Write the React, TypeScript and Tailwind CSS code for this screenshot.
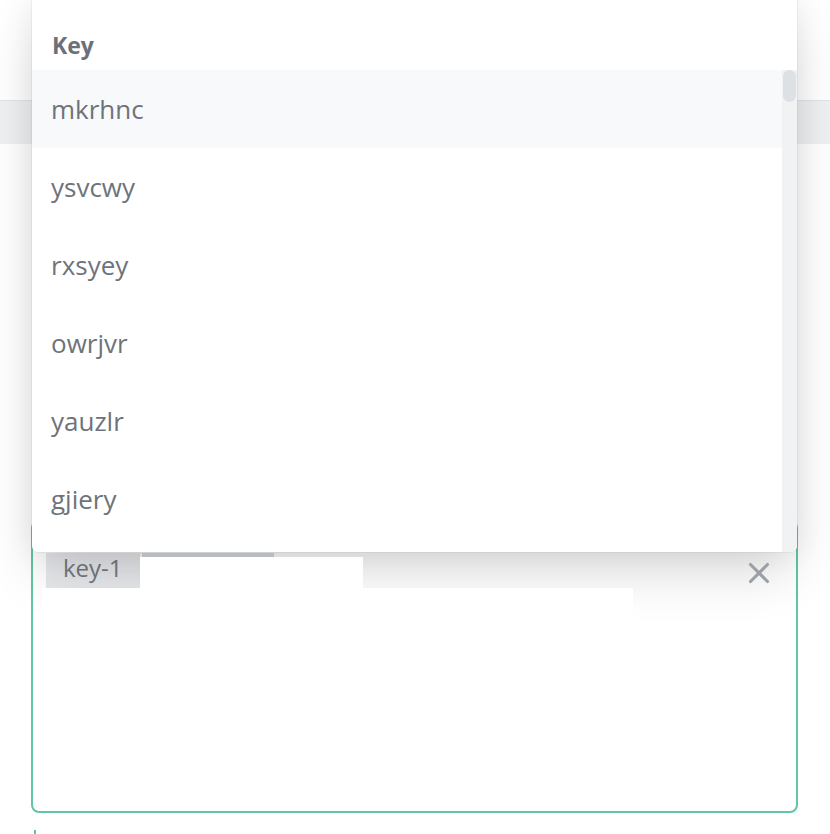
import { X } from "lucide-react"

const keys = ["mkrhnc", "ysvcwy", "rxsyey", "owrjvr", "yauzlr", "gjiery", "qtbnwa"]

export default function App() {
  return (
    <div className="relative h-[834px] w-[830px] overflow-hidden bg-white font-['Open_Sans',sans-serif]">
      {/* page header band behind the popover */}
      <div className="mt-[100px] h-[44px] border-t border-[#e2e4e7] bg-[#eef0f2]" />

      {/* key input */}
      <div className="relative ml-[31px] mt-[376px] h-[293px] w-[767px] rounded-lg border-2 border-[#62c6a0]">
        <div className="flex items-start pl-[13px] pt-[31px]">
          <span className="h-[35px] bg-[#e6e8eb] px-[17px] text-[24px] leading-[29px] text-[#747980]">key-1</span>
          <span className="ml-[2px] h-[35px] w-[132px] bg-[#d5d9de]" />
        </div>
        <div className="absolute left-[107px] top-[35px] z-20 h-[31px] w-[223px] bg-white" />
        <div className="absolute left-[9px] top-[66px] z-20 h-[110px] w-[591px] bg-white" />
        <button type="button" className="absolute right-[20px] top-[34px] z-20 text-[#9a9ea5]">
          <X size={34} strokeWidth={2.2} />
        </button>
      </div>
      <div className="ml-[34px] mt-[17px] h-[4px] w-[2px] bg-[#5ec59b]" />

      {/* dropdown */}
      <div className="absolute left-[32px] top-[-6px] z-10 flex h-[558px] w-[765px] flex-col overflow-hidden rounded-md bg-white shadow-[0_0_0_1px_rgba(0,0,0,0.04),0_24px_50px_-6px_rgba(0,0,0,0.16),0_0_30px_rgba(0,0,0,0.06)]">
        <div className="h-[76px] shrink-0 pl-[20px] pt-[36px] text-[23px] font-bold leading-[30px] text-[#6b7079]">Key</div>
        <div className="flex min-h-0 flex-1">
          <div className="flex-1 overflow-hidden">
            {keys.map((k, i) => (
              <div
                key={k}
                className={
                  i === 0
                    ? "flex h-[78px] items-center bg-[#f8f9fb] pl-[19px] text-[26px] text-[#6e737b]"
                    : "flex h-[78px] items-center pl-[19px] text-[26px] text-[#6e737b]"
                }
              >
                {i < 6 ? k : ""}
              </div>
            ))}
          </div>
          <div className="w-[15px] bg-[#f1f2f4]">
            <div className="mx-auto h-[32px] w-[13px] rounded-full bg-[#dde0e4]" />
          </div>
        </div>
      </div>
    </div>
  )
}
